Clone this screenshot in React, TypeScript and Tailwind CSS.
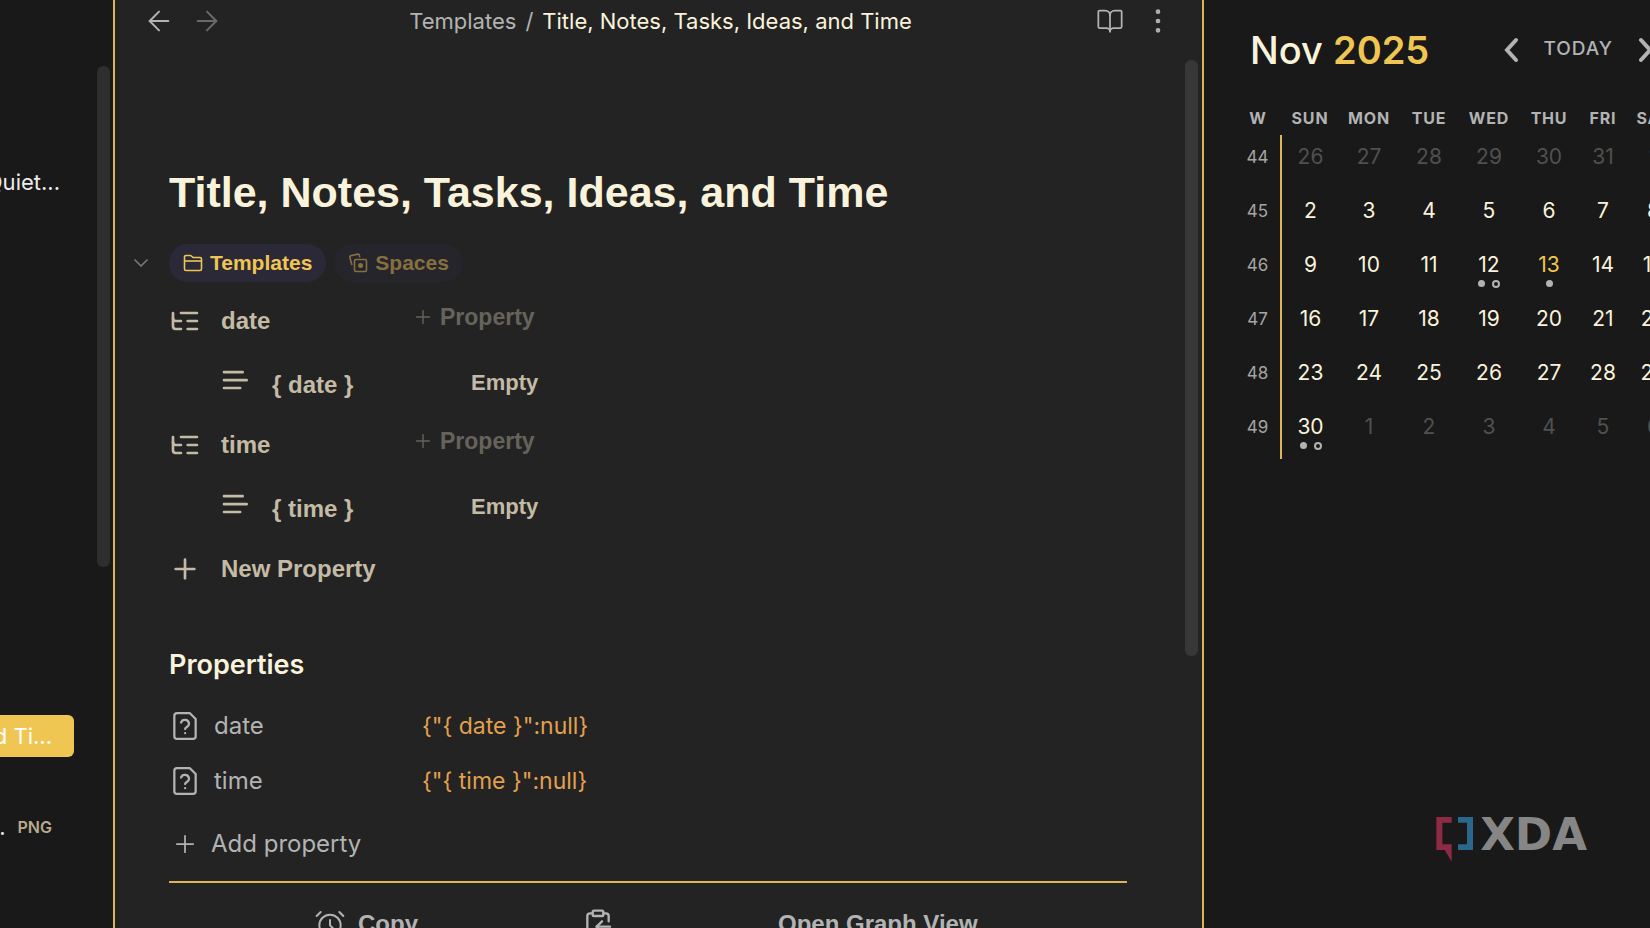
import React from 'react';
import {
  AlarmClock,
  ArrowLeft,
  ArrowRight,
  BookOpen,
  ChevronDown,
  ClipboardCopy,
  MoreVertical,
  Plus,
} from 'lucide-react';

interface IconProps {
  size?: number;
  className?: string;
}

const TreeIcon: React.FC<IconProps> = ({ size = 32 }) => (
  <svg width={size} height={size} viewBox="0 0 24 24" fill="none" stroke="currentColor" strokeWidth="2" strokeLinecap="round" strokeLinejoin="round">
    <path d="M21 12h-7M21 6H9M21 18h-7" />
    <path d="M3 6v4c0 1.100.9 2 2 2h4" />
    <path d="M3 10v6c0 1.100.9 2 2 2h4" />
  </svg>
);

const TextIcon: React.FC<IconProps> = ({ size = 32 }) => (
  <svg width={size} height={size} viewBox="0 0 24 24" fill="none" stroke="currentColor" strokeWidth="2" strokeLinecap="round">
    <path d="M17 6.100H3M20 12.100H3M15.100 18H3" />
  </svg>
);

const FileQuestionIcon: React.FC<IconProps> = ({ size = 32 }) => (
  <svg width={size} height={size} viewBox="0 0 24 24" fill="none" stroke="currentColor" strokeWidth="1.7" strokeLinecap="round" strokeLinejoin="round">
    <path d="M15.500 2.300H6a2 2 0 0 0-2 2v15.400a2 2 0 0 0 2 2h12a2 2 0 0 0 2-2V6.800z" />
    <path d="M9 9.400a3.100 3.100 0 0 1 6 1.100c0 2-2.900 2.400-2.900 3.800" />
    <path d="M12.100 17.400h.01" />
  </svg>
);

const FolderIcon: React.FC<IconProps> = ({ size = 20 }) => (
  <svg width={size} height={size} viewBox="0 0 20 20" fill="none" stroke="currentColor" strokeWidth="1.6" strokeLinejoin="round">
    <path d="M1.500 16V4A1.500 1.500 0 0 1 3 2.500h4.200c.5 0 .9.200 1.200.5L10 4.500h7A1.500 1.500 0 0 1 18.500 6v10a1.500 1.500 0 0 1-1.500 1.500H3A1.500 1.500 0 0 1 1.500 16z" />
    <path d="M1.500 8h17" />
  </svg>
);

const SpacesIcon: React.FC<IconProps> = ({ size = 20 }) => (
  <svg width={size} height={size} viewBox="0 0 20 20" fill="none" stroke="currentColor" strokeWidth="1.6" strokeLinejoin="round" strokeLinecap="round">
    <path d="M3.800 11.500 1.800 4.300c-.2-.7.200-1.400.9-1.600l7.200-1.600c.7-.1 1.300.3 1.400 1l.3 1.500" />
    <rect x="6.500" y="6.500" width="12" height="12" rx="1.500" />
    <circle cx="12.500" cy="12.500" r="2.500" fill="currentColor" stroke="none" />
  </svg>
);

const groups = ['date', 'time'];

const fileProperties = [
  { name: 'date', value: '{"{ date }":null}' },
  { name: 'time', value: '{"{ time }":null}' },
];

const weekdays = ['Sun', 'Mon', 'Tue', 'Wed', 'Thu', 'Fri', 'Sat'];

const weeks = [
  { number: 44, days: [26, 27, 28, 29, 30, 31, 1] },
  { number: 45, days: [2, 3, 4, 5, 6, 7, 8] },
  { number: 46, days: [9, 10, 11, 12, 13, 14, 15] },
  { number: 47, days: [16, 17, 18, 19, 20, 21, 22] },
  { number: 48, days: [23, 24, 25, 26, 27, 28, 29] },
  { number: 49, days: [30, 1, 2, 3, 4, 5, 6] },
];

// 'full' is a day with notes, 'open' is a day with unfinished tasks
const dots: Record<string, string[]> = {
  '46-12': ['full', 'open'],
  '46-13': ['full'],
  '49-30': ['full', 'open'],
};

const isOutside = (week: number, day: number) =>
  (week === 44 && day > 20) || (week === 49 && day < 20);

const dayColor = (week: number, day: number) => {
  if (week === 46 && day === 13) return 'text-[#f0c653]';
  return isOutside(week, day) ? 'text-[#505050]' : 'text-[#faf3dc]';
};

const Sidebar: React.FC = () => (
  <aside className="flex w-[115px] shrink-0 border-r-2 border-[#dcb556] bg-[#191919]">
    <ul className="w-[74px] overflow-hidden pt-[161px] text-[22px] text-[#ececec]">
      <li className="flex h-[42px] items-center justify-end pr-[14px] whitespace-nowrap">
        <a href="#quiet">Quiet...</a>
      </li>
      <li className="mt-[512px] flex h-[42px] items-center justify-end rounded-r-md bg-[#f0c653] pr-[22px] whitespace-nowrap text-white">
        <a href="#template">and Ti...</a>
      </li>
      <li className="mt-[49px] flex h-[42px] items-center justify-end gap-3 pr-[22px] whitespace-nowrap">
        <a href="#image">...</a>
        <span className="text-base font-semibold text-[#b8ab8e]">PNG</span>
      </li>
    </ul>
    <div className="ml-[23px] w-[13px] pt-[66px]">
      <div className="h-[501px] rounded-md bg-[#2e2e2e]" />
    </div>
  </aside>
);

const PropertyGroup: React.FC<{ name: string }> = ({ name }) => (
  <>
    <div className="flex h-[62px] items-center">
      <span className="w-[52px] shrink-0"><TreeIcon /></span>
      <span className="w-[191px] shrink-0 text-2xl">{name}</span>
      <button className="flex items-center gap-1.5 pb-2 text-[23px] leading-8 text-[#66635b]">
        <Plus size={22} strokeWidth={1.5} />
        Property
      </button>
    </div>
    <div className="flex h-[62px] items-center pl-[51px]">
      <span className="w-[52px] shrink-0 pb-1.5"><TextIcon /></span>
      <span className="w-[199px] shrink-0 pt-1 text-2xl">{`{ ${name} }`}</span>
      <button className="pb-0.5 text-[22px]">Empty</button>
    </div>
  </>
);

const Editor: React.FC = () => (
  <main className="flex min-w-0 flex-1 flex-col bg-[#232323]">
    <header className="grid h-[42px] shrink-0 grid-cols-[1fr_auto_1fr] items-center px-7 text-[#b3b3b3]">
      <div className="flex gap-4">
        <button aria-label="Back"><ArrowLeft size={32} strokeWidth={1.5} /></button>
        <button aria-label="Forward" className="text-[#6a6a6a]"><ArrowRight size={32} strokeWidth={1.5} /></button>
      </div>
      <nav className="flex gap-[9px] pl-1 text-[22px] whitespace-nowrap">
        <a href="#templates">Templates</a>
        <span>/</span>
        <span className="text-[#faf3dc]">Title, Notes, Tasks, Ideas, and Time</span>
      </nav>
      <div className="flex justify-end gap-4">
        <button aria-label="Reading view" className="flex w-8 items-center justify-center"><BookOpen size={28} strokeWidth={1.5} /></button>
        <button aria-label="More options"><MoreVertical size={32} strokeWidth={1.5} /></button>
      </div>
    </header>

    <div className="flex min-h-0 flex-1">
      <div className="min-w-0 flex-1 overflow-hidden pt-[124px] pr-[58px] pl-[54px]">
        <div className="font-['Liberation_Sans',Arial,sans-serif] font-bold text-[#c3bba5]">
          <h1 className="text-[43px] leading-[52px] text-[#faf3dc]">Title, Notes, Tasks, Ideas, and Time</h1>

          <div className="mt-[26px] -ml-10 flex items-center text-[21px]">
            <button aria-label="Collapse" className="mr-4 text-[#777777]"><ChevronDown size={24} strokeWidth={1.75} /></button>
            <button className="mr-2 flex h-[38px] items-center gap-[7px] rounded-full bg-[#2b2838] px-3.5 text-[#f0c653]">
              <FolderIcon />
              Templates
            </button>
            <button className="flex h-[38px] items-center gap-[7px] rounded-full bg-[#26252c] px-3.5 text-[#86703f]">
              <SpacesIcon />
              Spaces
            </button>
          </div>

          <section className="mt-2">
            {groups.map((name) => (
              <PropertyGroup key={name} name={name} />
            ))}
            <button className="flex h-[62px] items-center text-2xl">
              <span className="w-[52px]"><Plus size={32} strokeWidth={2} /></span>
              New Property
            </button>
          </section>
        </div>

        <section className="border-b-2 border-[#dcb556] pt-[49px] pb-[10px] text-2xl text-[#b3b3b3]">
          <h2 className="mb-[17px] text-[27px] leading-8 font-semibold text-[#faf3dc]">Properties</h2>
          {fileProperties.map((property) => (
            <div key={property.name} className="flex h-[55px] items-center">
              <span className="w-[45px] shrink-0"><FileQuestionIcon /></span>
              <span className="w-[208px] shrink-0">{property.name}</span>
              <span className="pt-0.5 text-[23px] text-[#e2a04e]">{property.value}</span>
            </div>
          ))}
          <button className="mt-2 flex h-[55px] items-center gap-3 pl-0.5">
            <Plus size={28} strokeWidth={1.5} />
            Add property
          </button>
        </section>

        <div className="mt-[25px] flex h-8 items-center gap-[164px] pl-[145px] font-['Liberation_Sans',Arial,sans-serif] text-2xl font-bold whitespace-nowrap text-[#b3b3b3]">
          <button className="flex items-center gap-3"><AlarmClock size={32} strokeWidth={1.5} />Copy</button>
          <button aria-label="Paste"><ClipboardCopy size={32} strokeWidth={1.75} /></button>
          <button>Open Graph View</button>
        </div>
      </div>
      <div className="mr-1 w-[13px] pt-[18px]">
        <div className="h-[596px] rounded-md bg-[#373737]" />
      </div>
    </div>
  </main>
);

const Calendar: React.FC = () => (
  <aside className="w-[448px] shrink-0 overflow-hidden border-l-2 border-[#dcb556] bg-[#191919] pl-[31px]">
    <div className="w-[445px]">
      <header className="flex h-[100px] items-center justify-between pr-[26px] pl-[15px]">
        <h2 className="text-[38px] leading-[48px] font-medium text-[#faf3dc]">
          Nov <span className="font-semibold text-[#f0c653]">2025</span>
        </h2>
        <div className="flex items-center gap-[25px] text-[#b3b3b3]">
          <button aria-label="Previous month">
            <svg width="16" height="26" viewBox="0 0 16 26" fill="none" stroke="currentColor" strokeWidth="4" strokeLinecap="round">
              <path d="M13 3 4 13l9 10" />
            </svg>
          </button>
          <button className="pb-0.5 text-[19px] font-medium tracking-wider uppercase">Today</button>
          <button aria-label="Next month">
            <svg width="16" height="26" viewBox="0 0 16 26" fill="none" stroke="currentColor" strokeWidth="4" strokeLinecap="round">
              <path d="m3 3 9 10-9 10" />
            </svg>
          </button>
        </div>
      </header>

      <table className="w-full table-fixed border-collapse text-center">
        <colgroup>
          <col className="w-[46px]" />
          <col className="w-[58px]" />
          <col className="w-[60px]" />
          <col className="w-[60px]" />
          <col className="w-[60px]" />
          <col className="w-[60px]" />
          <col className="w-[48px]" />
          <col className="w-[53px]" />
        </colgroup>
        <thead>
          <tr className="h-[35px] text-base font-bold tracking-wider text-[#b3b3b3] uppercase">
            <th>W</th>
            {weekdays.map((day) => (
              <th key={day}>{day}</th>
            ))}
          </tr>
        </thead>
        <tbody>
          {weeks.map((week) => (
            <tr key={week.number} className="h-[54px] align-top">
              <td className="border-r-2 border-[#dcb556] pt-[10px] text-[17px] leading-6 text-[#a5a5a5]">{week.number}</td>
              {week.days.map((day) => (
                <td key={day} className="pt-[10px]">
                  <div className={`text-[21px] leading-6 ${dayColor(week.number, day)}`}>{day}</div>
                  <div className="mt-[3px] flex h-[7px] justify-center gap-[7px]">
                    {(dots[`${week.number}-${day}`] || []).map((dot) => (
                      <span
                        key={dot}
                        className={dot === 'full' ? 'size-[7px] rounded-full bg-[#b3b3b3]' : 'size-[8px] rounded-full border-2 border-[#b3b3b3]'}
                      />
                    ))}
                  </div>
                </td>
              ))}
            </tr>
          ))}
        </tbody>
      </table>
    </div>
  </aside>
);

const Watermark: React.FC = () => (
  <div className="absolute right-[63px] bottom-[66px] flex items-start gap-[7px]">
    <svg width="37" height="45" viewBox="0 0 111 135">
      <path fill="#8f2a46" d="M1 0h46v17H19v65h28v52L26 99H1z" />
      <path fill="#2a678c" d="M66 0h45v99H66V82h27V17H66z" />
    </svg>
    <span className="font-['DejaVu_Sans',sans-serif] text-[45px] leading-[35px] font-bold text-[#868686]">XDA</span>
  </div>
);

const App: React.FC = () => {
  return (
    <div className="relative flex h-screen overflow-hidden font-['Inter',sans-serif]">
      <Sidebar />
      <Editor />
      <Calendar />
      <Watermark />
    </div>
  );
};

export default App;
